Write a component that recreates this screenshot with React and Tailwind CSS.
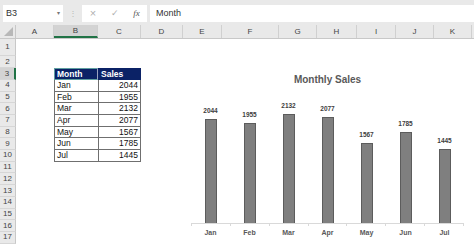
import React from "react";

const COLS = [
  { id: "A", w: 38 },
  { id: "B", w: 44 },
  { id: "C", w: 43 },
  { id: "D", w: 42 },
  { id: "E", w: 39 },
  { id: "F", w: 57 },
  { id: "G", w: 38 },
  { id: "H", w: 40 },
  { id: "I", w: 39 },
  { id: "J", w: 38 },
  { id: "K", w: 38 },
];

const SALES = [
  ["Jan", 2044],
  ["Feb", 1955],
  ["Mar", 2132],
  ["Apr", 2077],
  ["May", 1567],
  ["Jun", 1785],
  ["Jul", 1445],
];

const ROWS = Array.from({ length: 17 }, (_, i) => i + 1);

function rowHeight(r) {
  if (r === 1) return "h-[17px]";
  if (r === 2) return "h-[12.3px]";
  return "h-[11.7px]";
}

function FormulaBar() {
  return (
    <div className="h-[25px] bg-[#e9e9e9] flex items-start pt-[5px] text-[#333]">
      <div className="ml-[3px] w-[60px] h-[17px] bg-white flex items-center justify-between px-[3px] text-[9px]">
        <span>B3</span>
        <span className="text-[6px] text-[#777]">▾</span>
      </div>
      <div className="w-[19px] h-[17px] flex items-center justify-center text-[#b5b5b5] text-[8px]">⋮</div>
      <div className="w-[65px] h-[17px] bg-white flex items-center text-[#b0b0b0]">
        <span className="w-[22px] text-center text-[11px]">×</span>
        <span className="w-[22px] text-center text-[9px]">✓</span>
        <span className="w-[21px] text-center text-[9px] italic text-[#555]" style={{ fontFamily: "'Liberation Serif', serif" }}>
          fx
        </span>
      </div>
      <div className="ml-[3px] flex-1 h-[17px] bg-white flex items-center pl-[6px] text-[9px]">Month</div>
    </div>
  );
}

function ColumnHeader() {
  return (
    <div className="h-[14px] flex bg-[#e9e9e9] border-b border-[#c8c8c8] text-[8px] text-[#444]">
      <div className="w-[16px] relative border-r border-[#c8c8c8]">
        <div className="absolute right-[2px] bottom-[2px] w-0 h-0 border-l-[9px] border-l-transparent border-b-[9px] border-b-[#b8b8b8]" />
      </div>
      {COLS.map((c) => (
        <div
          key={c.id}
          className={
            "flex items-center justify-center border-r border-[#d0d0d0] " +
            (c.id === "B" ? "bg-[#d3d3d3] border-b-2 border-b-[#217346]" : "")
          }
          style={{ width: c.w }}
        >
          {c.id}
        </div>
      ))}
      <div className="flex-1" />
    </div>
  );
}

function TableCell({ r, col }) {
  if (r < 3 || r > 10) return null;
  const i = r - 4;
  if (r === 3) {
    return (
      <div
        className={
          "h-full bg-[#0b2266] text-white font-bold text-[8.5px] flex items-center px-[2px] " +
          (col === "B" ? "border border-[#5f9ea0] border-r-[#9aa3c0]" : "border border-[#0b2266]")
        }
      >
        {col === "B" ? "Month" : "Sales"}
      </div>
    );
  }
  return (
    <div
      className={
        "h-full border-l border-b border-[#6f6f6f] text-[8.5px] text-[#111] flex items-center px-[2px] " +
        (col === "C" ? "border-r justify-end" : "")
      }
    >
      {col === "B" ? SALES[i][0] : SALES[i][1]}
    </div>
  );
}

function Sheet() {
  return (
    <div className="flex flex-col">
      {ROWS.map((r) => (
        <div key={r} className={"flex " + rowHeight(r)}>
          <div
            className={
              "w-[16px] flex items-center justify-center text-[8px] text-[#444] border-b border-[#d6d6d6] " +
              (r === 3 ? "bg-[#d3d3d3] border-r-2 border-r-[#217346]" : "bg-[#e9e9e9] border-r border-r-[#c8c8c8]")
            }
          >
            {r}
          </div>
          {COLS.map((c) => (
            <div key={c.id} className="h-full" style={{ width: c.w }}>
              {(c.id === "B" || c.id === "C") && <TableCell r={r} col={c.id} />}
            </div>
          ))}
          <div className="flex-1" />
        </div>
      ))}
    </div>
  );
}

function Chart() {
  return (
    <div className="absolute left-[191px] top-[71px] w-[273px] flex flex-col">
      <div className="h-[16px] flex items-center justify-center text-[10px] font-bold text-[#595959]">
        Monthly Sales
      </div>
      <div className="h-[136px] flex items-end">
        {SALES.map(([m, v]) => (
          <div key={m} className="flex-1 flex flex-col items-center justify-end">
            <div className="text-[6.5px] font-bold text-[#404040] leading-none mb-[5px]">{v}</div>
            <div
              className="w-[12px] bg-[#7f7f7f] border border-[#5c5c5c] border-b-0"
              style={{ height: Math.round(v / 19.6) }}
            />
          </div>
        ))}
      </div>
      <div className="h-[3px] flex border-t border-[#d9d9d9]">
        {SALES.map(([m], i) => (
          <div
            key={m}
            className={"flex-1 border-l border-[#d9d9d9] " + (i === SALES.length - 1 ? "border-r" : "")}
          />
        ))}
      </div>
      <div className="h-[14px] flex items-center">
        {SALES.map(([m]) => (
          <div key={m} className="flex-1 text-center text-[7px] font-bold text-[#595959]">
            {m}
          </div>
        ))}
      </div>
    </div>
  );
}

export default function App() {
  return (
    <div
      className="relative w-[474px] h-[245px] overflow-hidden bg-white"
      style={{ fontFamily: "'Liberation Sans', Arial, sans-serif" }}
    >
      <FormulaBar />
      <ColumnHeader />
      <Sheet />
      <Chart />
    </div>
  );
}
